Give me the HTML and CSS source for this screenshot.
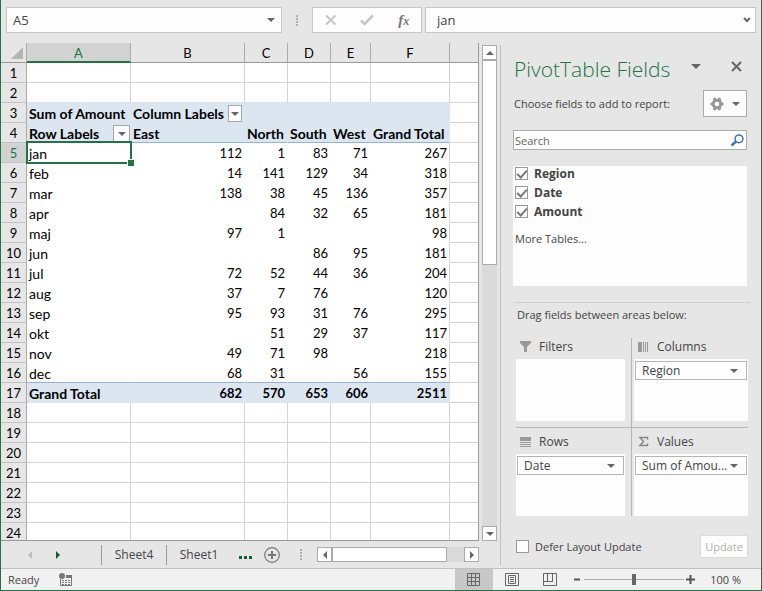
FILE: index.html
```
<!DOCTYPE html>
<html lang="en">
<head>
    <meta charset="UTF-8">
    <meta name="viewport" content="width=device-width, initial-scale=1.0">
    <title>PivotTable Fields</title>
    <link rel="stylesheet" href="styles.css">
</head>
<body>
    <header class="formula-bar">
        <div class="name-box">
            <input type="text" value="A5" aria-label="Name box">
            <button type="button" aria-label="Choose name"><span class="arrow"></span></button>
        </div>
        <div class="dots"><i></i><i></i><i></i><i></i></div>
        <div class="formula-buttons">
            <button type="button" aria-label="Cancel">
                <svg width="12" height="12" viewBox="0 0 12 12"><path d="M1 1.5L10.500 10.500M10.500 1.500L1 10.500" stroke="#c6c6c6" stroke-width="2" fill="none"/></svg>
            </button>
            <button type="button" aria-label="Enter">
                <svg width="14" height="12" viewBox="0 0 14 12"><path d="M1 6.500L4.500 10L13 1.500" stroke="#c6c6c6" stroke-width="2.500" fill="none"/></svg>
            </button>
            <button type="button" class="fx" aria-label="Insert function">f<small>x</small></button>
        </div>
        <div class="formula-input">
            <input type="text" value="jan" aria-label="Formula">
            <button type="button" aria-label="Expand formula bar">
                <svg width="8" height="6" viewBox="0 0 8 6"><path d="M1 1L4 4L7 1" stroke="#666" stroke-width="2" fill="none"/></svg>
            </button>
        </div>
    </header>

    <main>
        <section class="workbook">
            <div class="sheet-area">
                <div class="sheet">
                    <table>
                        <colgroup>
                            <col class="col-head"><col class="col-a"><col class="col-b"><col class="col-c"><col class="col-d"><col class="col-e"><col class="col-f"><col>
                        </colgroup>
                        <thead>
                            <tr>
                                <th class="corner"><svg width="12" height="12" viewBox="0 0 12 12"><path d="M12 0V12H0Z" fill="#b4b4b4"/></svg></th>
                                <th class="active">A</th><th>B</th><th>C</th><th>D</th><th>E</th><th>F</th><th></th>
                            </tr>
                        </thead>
                        <tbody>
                            <tr><th>1</th><td></td><td></td><td></td><td></td><td></td><td></td><td></td></tr>
                            <tr class="above"><th>2</th><td></td><td></td><td></td><td></td><td></td><td></td><td></td></tr>
                            <tr class="band labels"><th>3</th><td>Sum of Amount</td><td><div class="label">Column Labels<button type="button" class="filter" aria-label="Filter columns"><span class="arrow"></span></button></div></td><td></td><td></td><td></td><td></td><td></td></tr>
                            <tr class="band labels line"><th>4</th><td><div class="label spread">Row Labels<button type="button" class="filter" aria-label="Filter rows"><span class="arrow"></span></button></div></td><td>East</td><td>North</td><td>South</td><td>West</td><td>Grand Total</td><td></td></tr>
                            <tr class="data"><th class="active">5</th><td class="selected">jan</td><td>112</td><td>1</td><td>83</td><td>71</td><td>267</td><td></td></tr>
                            <tr class="data"><th>6</th><td>feb</td><td>14</td><td>141</td><td>129</td><td>34</td><td>318</td><td></td></tr>
                            <tr class="data"><th>7</th><td>mar</td><td>138</td><td>38</td><td>45</td><td>136</td><td>357</td><td></td></tr>
                            <tr class="data"><th>8</th><td>apr</td><td></td><td>84</td><td>32</td><td>65</td><td>181</td><td></td></tr>
                            <tr class="data"><th>9</th><td>maj</td><td>97</td><td>1</td><td></td><td></td><td>98</td><td></td></tr>
                            <tr class="data"><th>10</th><td>jun</td><td></td><td></td><td>86</td><td>95</td><td>181</td><td></td></tr>
                            <tr class="data"><th>11</th><td>jul</td><td>72</td><td>52</td><td>44</td><td>36</td><td>204</td><td></td></tr>
                            <tr class="data"><th>12</th><td>aug</td><td>37</td><td>7</td><td>76</td><td></td><td>120</td><td></td></tr>
                            <tr class="data"><th>13</th><td>sep</td><td>95</td><td>93</td><td>31</td><td>76</td><td>295</td><td></td></tr>
                            <tr class="data"><th>14</th><td>okt</td><td></td><td>51</td><td>29</td><td>37</td><td>117</td><td></td></tr>
                            <tr class="data"><th>15</th><td>nov</td><td>49</td><td>71</td><td>98</td><td></td><td>218</td><td></td></tr>
                            <tr class="data line"><th>16</th><td>dec</td><td>68</td><td>31</td><td></td><td>56</td><td>155</td><td></td></tr>
                            <tr class="data band"><th>17</th><td>Grand Total</td><td>682</td><td>570</td><td>653</td><td>606</td><td>2511</td><td></td></tr>
                            <tr><th>18</th><td></td><td></td><td></td><td></td><td></td><td></td><td></td></tr>
                            <tr><th>19</th><td></td><td></td><td></td><td></td><td></td><td></td><td></td></tr>
                            <tr><th>20</th><td></td><td></td><td></td><td></td><td></td><td></td><td></td></tr>
                            <tr><th>21</th><td></td><td></td><td></td><td></td><td></td><td></td><td></td></tr>
                            <tr><th>22</th><td></td><td></td><td></td><td></td><td></td><td></td><td></td></tr>
                            <tr><th>23</th><td></td><td></td><td></td><td></td><td></td><td></td><td></td></tr>
                            <tr><th>24</th><td></td><td></td><td></td><td></td><td></td><td></td><td></td></tr>
                        </tbody>
                    </table>
                </div>
                <div class="scroll-v">
                    <button type="button" aria-label="Scroll up"><span class="arrow up"></span></button>
                    <div class="track"><div class="thumb"></div></div>
                    <button type="button" aria-label="Scroll down"><span class="arrow"></span></button>
                </div>
            </div>
            <nav class="tabs">
                <div class="tab-arrows">
                    <button type="button" aria-label="Previous sheet"><span class="arrow left pale"></span></button>
                    <button type="button" aria-label="Next sheet"><span class="arrow right green"></span></button>
                </div>
                <a href="#sheet4">Sheet4</a>
                <a href="#sheet1">Sheet1</a>
                <button type="button" class="more" aria-label="More sheets"><i></i><i></i><i></i></button>
                <button type="button" class="add" aria-label="New sheet">
                    <svg width="16" height="16" viewBox="0 0 16 16"><circle cx="8" cy="8" r="7.300" stroke="#777" stroke-width="1.200" fill="none"/><path d="M8 4V12M4 8H12" stroke="#777" stroke-width="2"/></svg>
                </button>
                <div class="dots"><i></i><i></i><i></i><i></i></div>
                <div class="scroll-h">
                    <button type="button" aria-label="Scroll left"><span class="arrow left"></span></button>
                    <div class="track"><div class="thumb"></div></div>
                    <button type="button" aria-label="Scroll right"><span class="arrow right"></span></button>
                </div>
            </nav>
        </section>

        <aside class="pane">
            <div class="pane-title">
                <h1>PivotTable Fields</h1>
                <button type="button" aria-label="Pane options"><span class="arrow big"></span></button>
                <button type="button" aria-label="Close">
                    <svg width="11" height="11" viewBox="0 0 11 11"><path d="M1 1L10 10M10 1L1 10" stroke="#666" stroke-width="2" fill="none"/></svg>
                </button>
            </div>
            <div class="choose">
                <span>Choose fields to add to report:</span>
                <button type="button" class="tools" aria-label="Tools">
                    <svg width="14" height="14" viewBox="0 0 14 14"><circle cx="7" cy="7" r="3.800" stroke="#999" stroke-width="3" fill="none"/><path d="M4 1L5 3M10 1L9 3M.5 7H3M11 7H13.500M4 13L5 11M10 13L9 11" stroke="#999" stroke-width="3"/></svg>
                    <span class="arrow"></span>
                </button>
            </div>
            <div class="search">
                <input type="text" placeholder="Search" aria-label="Search">
                <button type="button" aria-label="Find">
                    <svg width="14" height="13" viewBox="0 0 14 13"><circle cx="9" cy="4.800" r="3.900" stroke="#3f74b5" stroke-width="1.500" fill="#fdfdfd"/><path d="M6 7.500L1.500 11.500" stroke="#3f74b5" stroke-width="2.500"/></svg>
                </button>
            </div>
            <div class="field-list">
                <label><input type="checkbox" checked>Region</label>
                <label><input type="checkbox" checked>Date</label>
                <label><input type="checkbox" checked>Amount</label>
                <a href="#tables">More Tables...</a>
            </div>
            <p class="drag">Drag fields between areas below:</p>
            <div class="areas">
                <div class="area">
                    <h2><svg width="13" height="12" viewBox="0 0 13 12"><path d="M1 0H12V2L8 6V11H5V6L1 2Z" fill="#999"/></svg>Filters</h2>
                    <div class="drop"></div>
                </div>
                <div class="area">
                    <h2><svg width="13" height="12" viewBox="0 0 13 12"><path d="M1 1H5V11H1ZM6 1H7V11H6ZM8 1H9V11H8ZM10 1H11V11H10Z" fill="#999"/></svg>Columns</h2>
                    <div class="drop"><button type="button">Region<span class="arrow"></span></button></div>
                </div>
                <div class="area">
                    <h2><svg width="13" height="12" viewBox="0 0 13 12"><path d="M1 1H12V5H1ZM1 6H12V7H1ZM1 8H12V9H1ZM1 10H12V11H1Z" fill="#999"/></svg>Rows</h2>
                    <div class="drop"><button type="button">Date<span class="arrow"></span></button></div>
                </div>
                <div class="area">
                    <h2><svg width="13" height="12" viewBox="0 0 13 12"><path d="M10.500 3.500V1.500H3L6.500 5.500L3 9.500H10.500V7.500" stroke="#888" stroke-width="1.500" fill="none"/></svg>Values</h2>
                    <div class="drop"><button type="button">Sum of Amou...<span class="arrow"></span></button></div>
                </div>
            </div>
            <div class="defer">
                <label><input type="checkbox">Defer Layout Update</label>
                <button type="button" disabled>Update</button>
            </div>
        </aside>
    </main>

    <footer class="status">
        <span>Ready</span>
        <button type="button" class="macro" aria-label="Record macro">
            <svg width="14" height="14" viewBox="0 0 14 14"><path d="M7 2.500H12.500V12.500H1.500V6" stroke="#777" fill="none"/><path d="M7 2H13V5H7Z" fill="#777"/><path d="M3 7.500H11M3 9.500H11M3 11.500H11" stroke="#777" stroke-dasharray="2 1"/><circle cx="3" cy="3" r="3" fill="#777"/></svg>
        </button>
        <div class="views">
            <button type="button" class="on" aria-label="Normal view">
                <svg width="14" height="14" viewBox="0 0 14 14"><path d="M.5 .5H12.500V12.500H.5ZM4.500 0V13M8.500 0V13M0 4.500H13M0 8.500H13" stroke="#666" fill="none"/></svg>
            </button>
            <button type="button" aria-label="Page layout view">
                <svg width="14" height="14" viewBox="0 0 14 14"><path d="M.5 .5H13.500V12.500H.5ZM3.500 2.500H10.500V10.500H3.500ZM5 4.500H9M5 6.500H9M5 8.500H9" stroke="#666" fill="none"/></svg>
            </button>
            <button type="button" aria-label="Page break view">
                <svg width="14" height="14" viewBox="0 0 14 14"><path d="M.5 .5H13.500V12.500H.5ZM4.500 0V8M9.500 0V8M0 8.500H10" stroke="#666" fill="none"/></svg>
            </button>
        </div>
        <div class="zoom">
            <button type="button" aria-label="Zoom out"><svg width="9" height="9" viewBox="0 0 9 9"><path d="M1 4.500H7" stroke="#555" stroke-width="2"/></svg></button>
            <input type="range" min="0" max="100" value="50" aria-label="Zoom">
            <button type="button" aria-label="Zoom in"><svg width="9" height="9" viewBox="0 0 9 9"><path d="M0 4.500H9M4.500 0V9" stroke="#555" stroke-width="2"/></svg></button>
            <span>100 %</span>
        </div>
    </footer>
</body>
</html>
```
FILE: styles.css
```
* {
    box-sizing: border-box;
}
body {
    font-family: "Open Sans", "Noto Sans", sans-serif;
    font-size: 12px;
    color: #444;
    background: #e6e6e6;
    margin: 0;
    height: 100vh;
    display: flex;
    flex-direction: column;
    overflow: hidden;
    border: 1px solid #217346;
    border-top: none;
}
button, input {
    font: inherit;
    color: inherit;
    margin: 0;
    padding: 0;
    border: none;
    background: none;
    min-width: 0;
}
button {
    display: flex;
    align-items: center;
    justify-content: center;
}
svg {
    display: block;
    flex: none;
}

/* small triangles */
.arrow {
    flex: none;
    border: 4px solid transparent;
    border-top-color: #666;
    border-bottom: none;
}
.arrow.big {
    border-width: 5px;
    border-bottom: none;
}
.arrow.up {
    border-top: none;
    border-bottom: 4px solid #666;
}
.arrow.left {
    border: 4px solid transparent;
    border-left: none;
    border-right-color: #666;
}
.arrow.right {
    border: 4px solid transparent;
    border-right: none;
    border-left-color: #666;
}
.arrow.pale {
    border-right-color: #bbb;
}
.arrow.green {
    border-left-color: #0a6332;
}
.dots {
    display: flex;
    flex-direction: column;
    align-items: center;
    justify-content: center;
    gap: 1px;
}
.dots i {
    width: 2px;
    height: 2px;
    background: #b0b0b0;
}

/* formula bar */
.formula-bar {
    flex: none;
    display: flex;
    height: 43px;
    padding: 7px 5px 10px;
    font-size: 13px;
}
.name-box, .formula-buttons, .formula-input {
    display: flex;
    align-items: center;
    background: #fdfdfd;
    border: 1px solid #c6c6c6;
}
.name-box {
    width: 276px;
    padding: 0 6px;
}
.name-box input, .formula-input input {
    flex: 1;
}
.formula-bar .dots {
    width: 30px;
}
.formula-buttons {
    width: 110px;
    justify-content: space-around;
    margin-right: 3px;
}
.fx {
    font: italic bold 15px "Liberation Serif", serif;
    color: #777;
}
.fx small {
    font-size: 12px;
    align-self: flex-end;
}
.formula-input {
    flex: 1;
    padding: 0 4px 0 11px;
}

main {
    flex: 1;
    min-height: 0;
    display: flex;
}
.workbook {
    flex: 1;
    min-width: 0;
    display: flex;
    flex-direction: column;
}
.sheet-area {
    flex: 1;
    min-height: 0;
    display: flex;
    gap: 3px;
    padding-right: 3px;
}

/* grid */
.sheet {
    flex: 1;
    overflow: hidden;
    background: #fff;
    border-right: 1px solid #999;
    border-bottom: 1px solid #999;
}
table {
    width: 100%;
    table-layout: fixed;
    border-collapse: separate;
    border-spacing: 0;
    font-family: Lato, "Open Sans", sans-serif;
    font-size: 13px;
    line-height: 17px;
    color: #000;
}
.col-head { width: 26px; }
.col-a { width: 104px; }
.col-b { width: 114px; }
.col-c, .col-d { width: 43px; }
.col-e { width: 40px; }
.col-f { width: 79px; }
th, td {
    height: 20px;
    padding: 2px 0 0;
    white-space: nowrap;
}
th {
    font-weight: normal;
    background: #e6e6e6;
    border-right: 1px solid #ababab;
    border-bottom: 1px solid #c3c3c3;
}
thead th {
    border-bottom-color: #999;
}
thead th:last-child {
    border-right: none;
}
th.active {
    color: #217346;
    background: #d2d2d2;
}
thead th.active {
    line-height: 16px;
    border-bottom: 2px solid #217346;
}
thead th.corner {
    padding: 0;
}
.corner svg {
    margin-left: 10px;
}
td {
    padding: 2px 2px 0;
    border-right: 1px solid #d4d4d4;
    border-bottom: 1px solid #d4d4d4;
}
td:last-child {
    border-right: none;
}
.above td:not(:last-child) {
    border-bottom-color: #dce6f1;
}
.band td:not(:last-child) {
    font-weight: bold;
    background: #dce6f1;
    border-color: #dce6f1;
}
.labels td, .data td:nth-child(2) {
    font-size: 14px;
}
.data td:not(:last-child) {
    border-bottom-color: transparent;
}
.data td:nth-child(-n+6) {
    border-right-color: transparent;
}
.data td:nth-child(n+3) {
    text-align: right;
}
.line td:not(:last-child) {
    border-bottom-color: #95b3d7;
}
.label {
    display: flex;
    align-items: center;
    gap: 4px;
}
.spread {
    justify-content: space-between;
    margin-right: -2px;
}
.filter {
    width: 17px;
    height: 17px;
    background: #fbfbfc;
    border: 1px solid #a3a9b1;
}
.selected {
    position: relative;
}
.selected::before {
    content: "";
    position: absolute;
    inset: -2px -2px -2px -1px;
    border: 2px solid #217346;
}
.selected::after {
    content: "";
    position: absolute;
    right: -4px;
    bottom: -4px;
    width: 6px;
    height: 6px;
    background: #217346;
    border: 1px solid #fff;
    border-width: 1px 0 0 1px;
}

/* scroll bars */
.scroll-v {
    width: 15px;
    margin-top: 2px;
    display: flex;
    flex-direction: column;
}
.scroll-h {
    flex: 1;
    height: 15px;
    display: flex;
}
.scroll-v button, .scroll-h button {
    flex: none;
    width: 15px;
    height: 15px;
    background: #fff;
    border: 1px solid #ababab;
}
.track {
    flex: 1;
    background: #dadada;
}
.thumb {
    background: #fff;
    border: 1px solid #ababab;
}
.scroll-v .thumb {
    height: 44%;
}
.scroll-h .thumb {
    width: 87%;
    height: 100%;
}

/* sheet tabs */
.tabs {
    flex: none;
    height: 27px;
    display: flex;
    align-items: center;
    padding-right: 21px;
}
.tab-arrows {
    width: 100px;
    padding-left: 27px;
    display: flex;
    gap: 24px;
}
.tabs a {
    width: 65px;
    line-height: 20px;
    text-align: center;
    color: #444;
    text-decoration: none;
    border-left: 1px solid #999;
}
.more {
    gap: 2px;
    margin: 6px 12px 0 8px;
}
.more i {
    width: 3px;
    height: 3px;
    background: #0a6332;
}
.tabs .dots {
    width: 42px;
    margin-right: -5px;
}

/* field pane */
.pane {
    width: 261px;
    margin: 2px 0 3px;
    padding: 12px 14px 0 12px;
    border-left: 1px solid #c0c0c0;
    display: flex;
    flex-direction: column;
    font-size: 11px;
}
.pane-title {
    display: flex;
    align-items: center;
    height: 24px;
    padding: 0 5px 0 1px;
}
h1 {
    flex: 1;
    margin: 0;
    font-size: 21px;
    font-weight: 300;
    line-height: 24px;
    color: #217346;
    white-space: nowrap;
}
.pane-title button {
    margin: 0 0 6px 30px;
}
.pane-title h1 + button {
    margin-left: 0;
}
.choose {
    display: flex;
    align-items: center;
    justify-content: space-between;
    margin: 9px 0 13px 1px;
    white-space: nowrap;
}
.choose .tools {
    width: 44px;
    height: 27px;
    gap: 8px;
    background: #fdfdfd;
    border: 1px solid #ababab;
}
.search {
    display: flex;
    align-items: center;
    height: 20px;
    padding: 0 2px 0 1px;
    background: #fdfdfd;
    border: 1px solid #ababab;
}
.search input {
    flex: 1;
}
.search input::placeholder {
    color: #666;
}
.field-list {
    display: flex;
    flex-direction: column;
    height: 120px;
    margin-top: 16px;
    padding: 0 2px;
    background: #fdfdfd;
}
.field-list label {
    display: flex;
    align-items: center;
    gap: 6px;
    height: 19px;
    padding-bottom: 4px;
    font-size: 12px;
    font-weight: bold;
}
.field-list a {
    margin-top: 8px;
    line-height: 16px;
    color: #444;
    text-decoration: none;
}
input[type="checkbox"] {
    appearance: none;
    flex: none;
    width: 13px;
    height: 13px;
    background: #fdfdfd;
    border: 1px solid #999;
    display: grid;
    place-items: center;
}
input[type="checkbox"]:checked::after {
    content: "";
    width: 8px;
    height: 4px;
    margin-bottom: 2px;
    border: 2px solid #777;
    border-width: 0 0 2px 2px;
    transform: rotate(-48deg);
}
.drag {
    margin: 16px -3px 0 2px;
    padding: 4px 2px;
    line-height: 16px;
    border-top: 1px dotted #bbb;
}
.areas {
    display: grid;
    grid-template-columns: 115px 1fr;
    margin: 11px -1px 0 3px;
}
.area {
    padding-right: 6px;
}
.area:nth-child(even) {
    padding: 0 0 0 2px;
    border-left: 1px solid #b5b5b5;
}
.area:nth-child(n+3) {
    border-top: 1px solid #b5b5b5;
    padding-top: 5px;
}
.area:nth-child(-n+2) .drop {
    margin-bottom: 6px;
}
h2 {
    display: flex;
    align-items: center;
    gap: 7px;
    margin: 0 0 3px;
    padding-left: 3px;
    font-size: 12px;
    font-weight: normal;
    line-height: 18px;
}
.drop {
    height: 62px;
    padding: 2px 1px;
    background: #fdfdfd;
}
.drop button {
    width: 100%;
    height: 19px;
    padding: 0 8px 0 6px;
    justify-content: space-between;
    font-size: 12px;
    white-space: nowrap;
    border: 1px solid #b5b5b5;
}
.defer {
    display: flex;
    align-items: center;
    justify-content: space-between;
    margin: 19px -1px 0 3px;
}
.defer label {
    display: flex;
    align-items: center;
    gap: 6px;
}
.defer button {
    width: 48px;
    height: 23px;
    color: #b1b1b1;
    background: #fdfdfd;
    border: 1px solid #dcdcdc;
}

/* status bar */
.status {
    flex: none;
    height: 22px;
    display: flex;
    align-items: center;
    padding: 0 20px 0 7px;
    font-size: 11px;
    background: #f1f1f1;
    border-top: 1px solid #c0c0c0;
}
.macro {
    margin-left: 20px;
}
.views {
    display: flex;
    align-self: stretch;
    margin-left: auto;
}
.views button {
    width: 38px;
}
.views .on {
    background: #c8c8c8;
}
.zoom {
    display: flex;
    align-items: center;
    gap: 2px;
    margin-left: 4px;
}
.zoom span {
    margin-left: 13px;
    white-space: nowrap;
}
.zoom input {
    appearance: none;
    width: 100px;
    height: 12px;
    background: linear-gradient(#aaa, #aaa) center / 100% 1px no-repeat;
}
.zoom input::-webkit-slider-thumb {
    appearance: none;
    width: 4px;
    height: 11px;
    background: #666;
}
```
